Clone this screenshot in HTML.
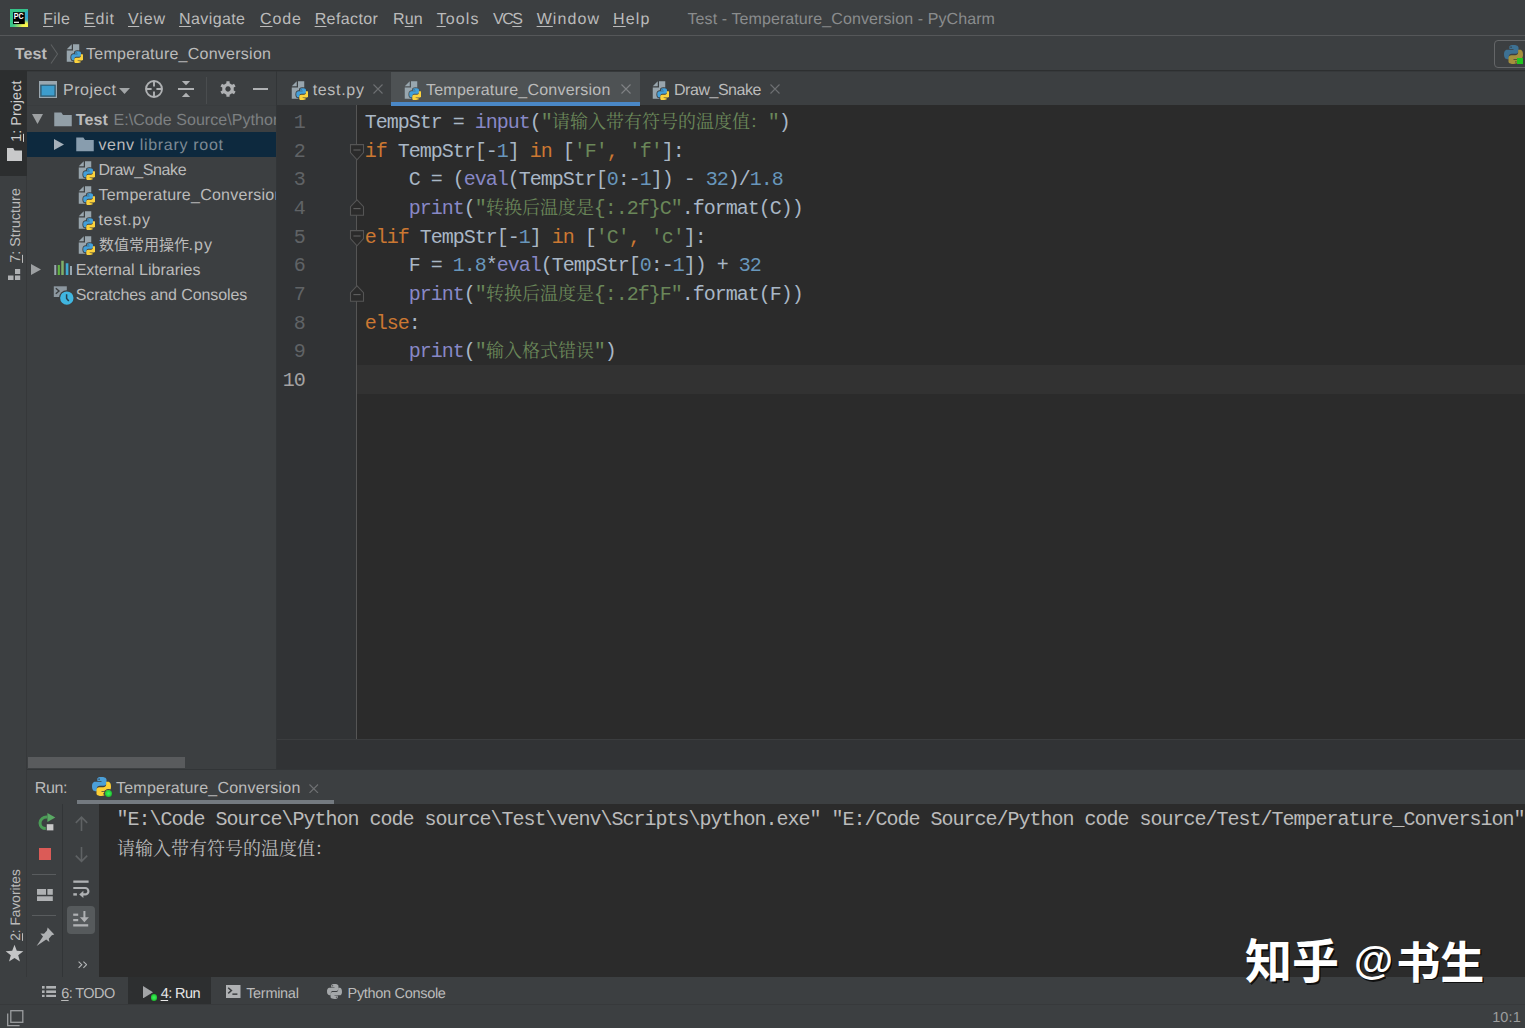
<!DOCTYPE html>
<html><head><meta charset="utf-8"><title>Test - Temperature_Conversion - PyCharm</title>
<style>
html,body{margin:0;padding:0;}
body{width:1525px;height:1028px;overflow:hidden;background:#3c3f41;position:relative;font-family:"Liberation Sans",sans-serif;}
#r{position:absolute;left:0;top:0;width:1525px;height:1028px;overflow:hidden;}
#r>div,#r>span,#r>svg{position:absolute;display:block;white-space:pre;}
.s{font-family:"Liberation Sans",sans-serif;text-rendering:geometricPrecision;}
.m{font-family:"Liberation Mono",monospace;}
u{text-decoration:underline;text-underline-offset:2px;text-decoration-thickness:1px;}
</style></head>
<body><div id="r">
<div style="left:0px;top:35px;width:1525px;height:1px;background:#555759;"></div>
<div style="left:0px;top:70px;width:1525px;height:1px;background:#2d2f30;"></div>
<div style="left:0px;top:71px;width:1525px;height:1px;background:#36393b;"></div>
<div style="left:0px;top:71px;width:27px;height:906px;background:#3c3f41;"></div>
<div style="left:0px;top:71px;width:27px;height:105px;background:#2c2e2f;"></div>
<div style="left:26px;top:176px;width:1px;height:801px;background:#36383a;"></div>
<div style="left:27px;top:105px;width:249px;height:1px;background:#393c3e;"></div>
<div style="left:27px;top:132px;width:249px;height:25px;background:#0d293e;"></div>
<div style="left:276px;top:71px;width:1px;height:699px;background:#323537;"></div>
<div style="left:391px;top:72px;width:249px;height:33px;background:#4e5254;"></div>
<div style="left:277px;top:105px;width:1248px;height:635px;background:#2b2b2b;"></div>
<div style="left:277px;top:105px;width:79px;height:635px;background:#313335;"></div>
<div style="left:356px;top:105px;width:1px;height:635px;background:#555555;"></div>
<div style="left:357px;top:365px;width:1168px;height:29px;background:#323232;"></div>
<div style="left:391px;top:102px;width:249px;height:4px;background:#4a88c7;"></div>
<div style="left:277px;top:739px;width:1248px;height:1px;background:#3b3d3f;"></div>
<div style="left:277px;top:740px;width:1248px;height:30px;background:#313335;"></div>
<div style="left:28px;top:757px;width:157px;height:11px;background:#595b5d;"></div>
<div style="left:27px;top:769px;width:1498px;height:1px;background:#323537;"></div>
<div style="left:27px;top:770px;width:1498px;height:34px;background:#3c3f41;"></div>
<div style="left:77px;top:800px;width:257px;height:4px;background:#747a80;"></div>
<div style="left:62px;top:804px;width:1px;height:173px;background:#323537;"></div>
<div style="left:99px;top:804px;width:1426px;height:173px;background:#2b2b2b;"></div>
<div style="left:0px;top:977px;width:1525px;height:28px;background:#3c3f41;"></div>
<div style="left:128px;top:977px;width:83px;height:28px;background:#2d2f30;"></div>
<div style="left:0px;top:1004px;width:1525px;height:1px;background:#37393b;"></div>
<div style="left:0px;top:1005px;width:1525px;height:23px;background:#3c3f41;"></div>
<span class="s " style="left:43.04px;top:9.00px;font-size:16px;line-height:21px;color:#bbbbbb;letter-spacing:0.379px;"><u>F</u>ile</span>
<span class="s " style="left:84.04px;top:9.00px;font-size:16px;line-height:21px;color:#bbbbbb;letter-spacing:0.783px;"><u>E</u>dit</span>
<span class="s " style="left:128.04px;top:9.00px;font-size:16px;line-height:21px;color:#bbbbbb;letter-spacing:0.843px;"><u>V</u>iew</span>
<span class="s " style="left:179.04px;top:9.00px;font-size:16px;line-height:21px;color:#bbbbbb;letter-spacing:0.396px;"><u>N</u>avigate</span>
<span class="s " style="left:260.04px;top:9.00px;font-size:16px;line-height:21px;color:#bbbbbb;letter-spacing:0.890px;"><u>C</u>ode</span>
<span class="s " style="left:314.64px;top:9.00px;font-size:16px;line-height:21px;color:#bbbbbb;letter-spacing:0.407px;"><u>R</u>efactor</span>
<span class="s " style="left:393.04px;top:9.00px;font-size:16px;line-height:21px;color:#bbbbbb;letter-spacing:0.084px;">R<u>u</u>n</span>
<span class="s " style="left:436.64px;top:9.00px;font-size:16px;line-height:21px;color:#bbbbbb;letter-spacing:1.142px;"><u>T</u>ools</span>
<span class="s " style="left:493.04px;top:9.00px;font-size:16px;line-height:21px;color:#bbbbbb;letter-spacing:-1.490px;">VC<u>S</u></span>
<span class="s " style="left:536.64px;top:9.00px;font-size:16px;line-height:21px;color:#bbbbbb;letter-spacing:1.082px;"><u>W</u>indow</span>
<span class="s " style="left:613.04px;top:9.00px;font-size:16px;line-height:21px;color:#bbbbbb;letter-spacing:1.137px;"><u>H</u>elp</span>
<span class="s " style="left:687.44px;top:9.00px;font-size:16px;line-height:21px;color:#8a8c8d;letter-spacing:0.097px;">Test - Temperature_Conversion - PyCharm</span>
<span class="s " style="left:14.64px;top:44.00px;font-size:16px;line-height:21px;color:#bbbbbb;font-weight:bold;letter-spacing:0.203px;">Test</span>
<span class="s " style="left:86.04px;top:44.00px;font-size:16px;line-height:21px;color:#bbbbbb;letter-spacing:0.251px;">Temperature_Conversion</span>
<span class="s " style="left:63.04px;top:80.00px;font-size:16px;line-height:21px;color:#bbbbbb;letter-spacing:0.520px;">Project</span>
<span class="s " style="left:312.64px;top:80.00px;font-size:16px;line-height:21px;color:#bbbbbb;letter-spacing:0.698px;">test.py</span>
<span class="s " style="left:426.04px;top:80.00px;font-size:16px;line-height:21px;color:#bbbbbb;letter-spacing:0.222px;">Temperature_Conversion</span>
<span class="s " style="left:674.04px;top:80.00px;font-size:16px;line-height:21px;color:#bbbbbb;letter-spacing:-0.476px;">Draw_Snake</span>
<span class="s " style="left:75.64px;top:110.00px;font-size:16px;line-height:21px;color:#bbbbbb;font-weight:bold;letter-spacing:0.203px;">Test</span>
<span class="s " style="left:113.44px;top:110.00px;font-size:16px;line-height:21px;color:#7d8082;letter-spacing:0.063px;width:162.5px;overflow:hidden;">E:\Code Source\Python code</span>
<span class="s " style="left:98.44px;top:135.00px;font-size:16px;line-height:21px;color:#bbbbbb;letter-spacing:0.574px;">venv</span>
<span class="s " style="left:139.64px;top:135.00px;font-size:16px;line-height:21px;color:#7d8a94;letter-spacing:0.704px;">library root</span>
<span class="s " style="left:98.44px;top:160.00px;font-size:16px;line-height:21px;color:#bbbbbb;letter-spacing:-0.387px;">Draw_Snake</span>
<span class="s " style="left:98.44px;top:185.00px;font-size:16px;line-height:21px;color:#bbbbbb;letter-spacing:0.251px;width:177.5px;overflow:hidden;">Temperature_Conversion</span>
<span class="s " style="left:98.44px;top:210.00px;font-size:16px;line-height:21px;color:#bbbbbb;letter-spacing:0.731px;">test.py</span>
<svg style="left:98.5px;top:235.00px;" width="90.0" height="19.5" viewBox="0 0 90 19.5"><text x="0" y="15" font-size="15" fill="#bbbbbb" font-family="'Liberation Sans','Noto Sans CJK SC',sans-serif">数值常用操作</text></svg>
<span class="s " style="left:188.54px;top:235.00px;font-size:16px;line-height:21px;color:#bbbbbb;letter-spacing:1.038px;">.py</span>
<span class="s " style="left:75.64px;top:260.00px;font-size:16px;line-height:21px;color:#bbbbbb;letter-spacing:0.024px;">External Libraries</span>
<span class="s " style="left:75.64px;top:285.00px;font-size:16px;line-height:21px;color:#bbbbbb;letter-spacing:-0.082px;">Scratches and Consoles</span>
<span class="s " style="left:34.64px;top:778.00px;font-size:16px;line-height:21px;color:#bbbbbb;letter-spacing:-0.293px;">Run:</span>
<span class="s " style="left:116.04px;top:778.00px;font-size:16px;line-height:21px;color:#bbbbbb;letter-spacing:0.222px;">Temperature_Conversion</span>
<span class="s " style="left:61.13px;top:984.00px;font-size:14.5px;line-height:20px;color:#bbbbbb;letter-spacing:-0.557px;"><u>6</u>: TODO</span>
<span class="s " style="left:160.63px;top:984.00px;font-size:14.5px;line-height:20px;color:#e8e8e8;letter-spacing:-0.576px;"><u>4</u>: Run</span>
<span class="s " style="left:246.13px;top:984.00px;font-size:14.5px;line-height:20px;color:#bbbbbb;letter-spacing:-0.294px;">Terminal</span>
<span class="s " style="left:347.53px;top:984.00px;font-size:14.5px;line-height:20px;color:#bbbbbb;letter-spacing:-0.310px;">Python Console</span>
<span class="s " style="left:1492.13px;top:1008.00px;font-size:14.5px;line-height:20px;color:#9b9d9e;letter-spacing:0.173px;">10:1</span>
<span class="s" style="left:16.5px;top:141px;font-size:14.3px;line-height:20px;color:#d0d0d0;letter-spacing:0.090px;transform-origin:0 0;transform:rotate(-90deg) translate(-0.86px,-10.0px);"><u>1</u>: Project</span>
<span class="s" style="left:16px;top:262px;font-size:14.3px;line-height:20px;color:#bbbbbb;letter-spacing:0.073px;transform-origin:0 0;transform:rotate(-90deg) translate(-0.86px,-10.0px);"><u>7</u>: Structure</span>
<span class="s" style="left:16px;top:940px;font-size:13.7px;line-height:20px;color:#bbbbbb;letter-spacing:0.007px;transform-origin:0 0;transform:rotate(-90deg) translate(-0.82px,-10.0px);"><u>2</u>: Favorites</span>
<svg style="left:10px;top:8.6px;" width="18.2" height="18.6" viewBox="0 0 18.2 18.6"><defs><radialGradient id="pcy" cx="1" cy="1" r="0.95"><stop offset="0" stop-color="#fcf84a"/><stop offset=".35" stop-color="#f3f24e"/><stop offset=".7" stop-color="#9fdc6a" stop-opacity=".6"/><stop offset="1" stop-color="#3bc48c" stop-opacity="0"/></radialGradient><radialGradient id="pcb" cx="1" cy=".38" r=".42"><stop offset="0" stop-color="#2a9fdc"/><stop offset=".55" stop-color="#2fa8cf" stop-opacity=".85"/><stop offset="1" stop-color="#35b9a5" stop-opacity="0"/></radialGradient></defs><rect width="18.2" height="18.6" fill="#36c389"/><rect width="18.2" height="18.6" fill="url(#pcy)"/><rect width="18.2" height="18.6" fill="url(#pcb)"/><rect x="3" y="3.2" width="11.8" height="11.9" fill="#000"/><text transform="translate(3.8,10.4) scale(0.804,1)" x="0" y="0" font-size="8.87" font-weight="bold" fill="#fff" font-family="'Liberation Sans',sans-serif">PC</text><rect x="4" y="12.7" width="5" height="1.3" fill="#e8e8e8"/></svg>
<svg style="left:50px;top:44px;" width="9" height="20" viewBox="0 0 9 20"><path d="M1,0.5L7.5,10L1,19.5" stroke="#5d6062" stroke-width="1.1" fill="none"/></svg>
<svg style="left:63px;top:43px;" width="20" height="20" viewBox="0 0 16 16"><g fill="#9fadb6" fill-opacity=".93"><path d="M7,1L3,5H7Z"/><path d="M8,1V6H3V15H13V1Z"/></g><g transform="translate(6.6,6.5) scale(0.93,0.9)"><path d="M5.4,0C3,0 3.1,1.1 3.1,1.1V2.3H5.5V2.7H2C2,2.7 0,2.5 0,5.4C0,8.3 1.7,8.2 1.7,8.2H2.8V6.8C2.8,6.8 2.7,5.1 4.5,5.1H6.8C6.8,5.1 8.4,5.1 8.4,3.5V1.6C8.4,1.6 8.7,0 5.4,0Z" fill="#3c3f41" stroke="#3c3f41" stroke-width="1.5"/><path d="M5.4,0C3,0 3.1,1.1 3.1,1.1V2.3H5.5V2.7H2C2,2.7 0,2.5 0,5.4C0,8.3 1.7,8.2 1.7,8.2H2.8V6.8C2.8,6.8 2.7,5.1 4.5,5.1H6.8C6.8,5.1 8.4,5.1 8.4,3.5V1.6C8.4,1.6 8.7,0 5.4,0Z" fill="#3c3f41" stroke="#3c3f41" stroke-width="1.5" transform="rotate(180 5.5 5.5)"/></g><g transform="translate(6.6,6.5) scale(0.93,0.9)" opacity="1"><path d="M5.4,0C3,0 3.1,1.1 3.1,1.1V2.3H5.5V2.7H2C2,2.7 0,2.5 0,5.4C0,8.3 1.7,8.2 1.7,8.2H2.8V6.8C2.8,6.8 2.7,5.1 4.5,5.1H6.8C6.8,5.1 8.4,5.1 8.4,3.5V1.6C8.4,1.6 8.7,0 5.4,0Z" fill="#439fd8"/><path d="M5.4,0C3,0 3.1,1.1 3.1,1.1V2.3H5.5V2.7H2C2,2.7 0,2.5 0,5.4C0,8.3 1.7,8.2 1.7,8.2H2.8V6.8C2.8,6.8 2.7,5.1 4.5,5.1H6.8C6.8,5.1 8.4,5.1 8.4,3.5V1.6C8.4,1.6 8.7,0 5.4,0Z" fill="#fbd23c" transform="rotate(180 5.5 5.5)"/><circle cx="4.1" cy="1.25" r="0.5" fill="#2b2b2b" opacity=".6"/><circle cx="6.9" cy="9.75" r="0.5" fill="#2b2b2b" opacity=".6"/></g></svg>
<div style="left:1494px;top:40px;width:40px;height:26px;border:1px solid #646668;border-radius:4px;"></div>
<svg style="left:1504px;top:45px;" width="19" height="19" viewBox="0 0 11 11"><g transform="translate(0,0) scale(1,1)" opacity="0.55"><path d="M5.4,0C3,0 3.1,1.1 3.1,1.1V2.3H5.5V2.7H2C2,2.7 0,2.5 0,5.4C0,8.3 1.7,8.2 1.7,8.2H2.8V6.8C2.8,6.8 2.7,5.1 4.5,5.1H6.8C6.8,5.1 8.4,5.1 8.4,3.5V1.6C8.4,1.6 8.7,0 5.4,0Z" fill="#3f9ad6"/><path d="M5.4,0C3,0 3.1,1.1 3.1,1.1V2.3H5.5V2.7H2C2,2.7 0,2.5 0,5.4C0,8.3 1.7,8.2 1.7,8.2H2.8V6.8C2.8,6.8 2.7,5.1 4.5,5.1H6.8C6.8,5.1 8.4,5.1 8.4,3.5V1.6C8.4,1.6 8.7,0 5.4,0Z" fill="#fcd53a" transform="rotate(180 5.5 5.5)"/><circle cx="4.1" cy="1.25" r="0.5" fill="#2b2b2b" opacity=".6"/><circle cx="6.9" cy="9.75" r="0.5" fill="#2b2b2b" opacity=".6"/></g></svg>
<div style="left:1517px;top:58px;width:6px;height:6px;background:#21c420;"></div>
<svg style="left:39px;top:81px;" width="18" height="17" viewBox="0 0 18 17"><rect x="0.6" y="0.6" width="16.8" height="15.8" fill="#2f5d73" stroke="#9aa7b0" stroke-width="1.2"/><rect x="0" y="0" width="18" height="3.6" fill="#9aa7b0"/><rect x="2.6" y="4.8" width="12.8" height="9.6" fill="#3d9dcd"/></svg>
<svg style="left:119px;top:88px;" width="11" height="6" viewBox="0 0 11 6"><path d="M0,0H11L5.5,6Z" fill="#a2a5a7"/></svg>
<svg style="left:144px;top:79px;" width="20" height="20" viewBox="0 0 20 20"><g stroke="#afb1b3" fill="none" stroke-width="1.9"><circle cx="10" cy="10" r="8"/><path d="M10,2.5V7.6M10,12.4V17.5M2.5,10H7.6M12.4,10H17.5"/></g></svg>
<svg style="left:178px;top:81px;" width="16" height="16" viewBox="0 0 16 16"><g fill="#afb1b3"><path d="M3.8,0H12.2L8,4.3Z"/><rect x="0" y="7" width="16" height="2"/><path d="M3.8,16H12.2L8,11.7Z"/></g></svg>
<div style="left:206px;top:77px;width:1px;height:27px;background:#4a4d4f;"></div>
<svg style="left:220px;top:80.5px;" width="16" height="16" viewBox="0 0 16 16"><path fill-rule="evenodd" fill="#afb1b3" d="M6.35,2.33L6.45,0.15L9.55,0.15L9.65,2.33L12.08,3.74L14.02,2.73L15.57,5.42L13.73,6.59L13.73,9.41L15.57,10.58L14.02,13.27L12.08,12.26L9.65,13.67L9.55,15.85L6.45,15.85L6.35,13.67L3.92,12.26L1.98,13.27L0.43,10.58L2.27,9.41L2.27,6.59L0.43,5.42L1.98,2.73L3.92,3.74Z M8,5.3a2.7,2.7 0 1,0 0.001,0Z"/></svg>
<div style="left:252.5px;top:88.2px;width:15px;height:2.2px;background:#afb1b3;"></div>
<svg style="left:288px;top:80px;" width="20" height="20" viewBox="0 0 16 16"><g fill="#9fadb6" fill-opacity=".93"><path d="M7,1L3,5H7Z"/><path d="M8,1V6H3V15H13V1Z"/></g><g transform="translate(6.6,6.5) scale(0.93,0.9)"><path d="M5.4,0C3,0 3.1,1.1 3.1,1.1V2.3H5.5V2.7H2C2,2.7 0,2.5 0,5.4C0,8.3 1.7,8.2 1.7,8.2H2.8V6.8C2.8,6.8 2.7,5.1 4.5,5.1H6.8C6.8,5.1 8.4,5.1 8.4,3.5V1.6C8.4,1.6 8.7,0 5.4,0Z" fill="#3c3f41" stroke="#3c3f41" stroke-width="1.5"/><path d="M5.4,0C3,0 3.1,1.1 3.1,1.1V2.3H5.5V2.7H2C2,2.7 0,2.5 0,5.4C0,8.3 1.7,8.2 1.7,8.2H2.8V6.8C2.8,6.8 2.7,5.1 4.5,5.1H6.8C6.8,5.1 8.4,5.1 8.4,3.5V1.6C8.4,1.6 8.7,0 5.4,0Z" fill="#3c3f41" stroke="#3c3f41" stroke-width="1.5" transform="rotate(180 5.5 5.5)"/></g><g transform="translate(6.6,6.5) scale(0.93,0.9)" opacity="1"><path d="M5.4,0C3,0 3.1,1.1 3.1,1.1V2.3H5.5V2.7H2C2,2.7 0,2.5 0,5.4C0,8.3 1.7,8.2 1.7,8.2H2.8V6.8C2.8,6.8 2.7,5.1 4.5,5.1H6.8C6.8,5.1 8.4,5.1 8.4,3.5V1.6C8.4,1.6 8.7,0 5.4,0Z" fill="#439fd8"/><path d="M5.4,0C3,0 3.1,1.1 3.1,1.1V2.3H5.5V2.7H2C2,2.7 0,2.5 0,5.4C0,8.3 1.7,8.2 1.7,8.2H2.8V6.8C2.8,6.8 2.7,5.1 4.5,5.1H6.8C6.8,5.1 8.4,5.1 8.4,3.5V1.6C8.4,1.6 8.7,0 5.4,0Z" fill="#fbd23c" transform="rotate(180 5.5 5.5)"/><circle cx="4.1" cy="1.25" r="0.5" fill="#2b2b2b" opacity=".6"/><circle cx="6.9" cy="9.75" r="0.5" fill="#2b2b2b" opacity=".6"/></g></svg>
<svg style="left:373px;top:84.3px;" width="10" height="10" viewBox="0 0 10 10"><path d="M0.5,0.5L9.5,9.5M9.5,0.5L0.5,9.5" stroke="#6e7072" stroke-width="1.1" fill="none"/></svg>
<svg style="left:400.7px;top:80px;" width="20" height="20" viewBox="0 0 16 16"><g fill="#9fadb6" fill-opacity=".93"><path d="M7,1L3,5H7Z"/><path d="M8,1V6H3V15H13V1Z"/></g><g transform="translate(6.6,6.5) scale(0.93,0.9)"><path d="M5.4,0C3,0 3.1,1.1 3.1,1.1V2.3H5.5V2.7H2C2,2.7 0,2.5 0,5.4C0,8.3 1.7,8.2 1.7,8.2H2.8V6.8C2.8,6.8 2.7,5.1 4.5,5.1H6.8C6.8,5.1 8.4,5.1 8.4,3.5V1.6C8.4,1.6 8.7,0 5.4,0Z" fill="#4e5254" stroke="#4e5254" stroke-width="1.5"/><path d="M5.4,0C3,0 3.1,1.1 3.1,1.1V2.3H5.5V2.7H2C2,2.7 0,2.5 0,5.4C0,8.3 1.7,8.2 1.7,8.2H2.8V6.8C2.8,6.8 2.7,5.1 4.5,5.1H6.8C6.8,5.1 8.4,5.1 8.4,3.5V1.6C8.4,1.6 8.7,0 5.4,0Z" fill="#4e5254" stroke="#4e5254" stroke-width="1.5" transform="rotate(180 5.5 5.5)"/></g><g transform="translate(6.6,6.5) scale(0.93,0.9)" opacity="1"><path d="M5.4,0C3,0 3.1,1.1 3.1,1.1V2.3H5.5V2.7H2C2,2.7 0,2.5 0,5.4C0,8.3 1.7,8.2 1.7,8.2H2.8V6.8C2.8,6.8 2.7,5.1 4.5,5.1H6.8C6.8,5.1 8.4,5.1 8.4,3.5V1.6C8.4,1.6 8.7,0 5.4,0Z" fill="#439fd8"/><path d="M5.4,0C3,0 3.1,1.1 3.1,1.1V2.3H5.5V2.7H2C2,2.7 0,2.5 0,5.4C0,8.3 1.7,8.2 1.7,8.2H2.8V6.8C2.8,6.8 2.7,5.1 4.5,5.1H6.8C6.8,5.1 8.4,5.1 8.4,3.5V1.6C8.4,1.6 8.7,0 5.4,0Z" fill="#fbd23c" transform="rotate(180 5.5 5.5)"/><circle cx="4.1" cy="1.25" r="0.5" fill="#2b2b2b" opacity=".6"/><circle cx="6.9" cy="9.75" r="0.5" fill="#2b2b2b" opacity=".6"/></g></svg>
<svg style="left:620.8px;top:84.3px;" width="10" height="10" viewBox="0 0 10 10"><path d="M0.5,0.5L9.5,9.5M9.5,0.5L0.5,9.5" stroke="#808385" stroke-width="1.1" fill="none"/></svg>
<svg style="left:648.7px;top:80px;" width="20" height="20" viewBox="0 0 16 16"><g fill="#9fadb6" fill-opacity=".93"><path d="M7,1L3,5H7Z"/><path d="M8,1V6H3V15H13V1Z"/></g><g transform="translate(6.6,6.5) scale(0.93,0.9)"><path d="M5.4,0C3,0 3.1,1.1 3.1,1.1V2.3H5.5V2.7H2C2,2.7 0,2.5 0,5.4C0,8.3 1.7,8.2 1.7,8.2H2.8V6.8C2.8,6.8 2.7,5.1 4.5,5.1H6.8C6.8,5.1 8.4,5.1 8.4,3.5V1.6C8.4,1.6 8.7,0 5.4,0Z" fill="#3c3f41" stroke="#3c3f41" stroke-width="1.5"/><path d="M5.4,0C3,0 3.1,1.1 3.1,1.1V2.3H5.5V2.7H2C2,2.7 0,2.5 0,5.4C0,8.3 1.7,8.2 1.7,8.2H2.8V6.8C2.8,6.8 2.7,5.1 4.5,5.1H6.8C6.8,5.1 8.4,5.1 8.4,3.5V1.6C8.4,1.6 8.7,0 5.4,0Z" fill="#3c3f41" stroke="#3c3f41" stroke-width="1.5" transform="rotate(180 5.5 5.5)"/></g><g transform="translate(6.6,6.5) scale(0.93,0.9)" opacity="1"><path d="M5.4,0C3,0 3.1,1.1 3.1,1.1V2.3H5.5V2.7H2C2,2.7 0,2.5 0,5.4C0,8.3 1.7,8.2 1.7,8.2H2.8V6.8C2.8,6.8 2.7,5.1 4.5,5.1H6.8C6.8,5.1 8.4,5.1 8.4,3.5V1.6C8.4,1.6 8.7,0 5.4,0Z" fill="#439fd8"/><path d="M5.4,0C3,0 3.1,1.1 3.1,1.1V2.3H5.5V2.7H2C2,2.7 0,2.5 0,5.4C0,8.3 1.7,8.2 1.7,8.2H2.8V6.8C2.8,6.8 2.7,5.1 4.5,5.1H6.8C6.8,5.1 8.4,5.1 8.4,3.5V1.6C8.4,1.6 8.7,0 5.4,0Z" fill="#fbd23c" transform="rotate(180 5.5 5.5)"/><circle cx="4.1" cy="1.25" r="0.5" fill="#2b2b2b" opacity=".6"/><circle cx="6.9" cy="9.75" r="0.5" fill="#2b2b2b" opacity=".6"/></g></svg>
<svg style="left:770px;top:84.3px;" width="10" height="10" viewBox="0 0 10 10"><path d="M0.5,0.5L9.5,9.5M9.5,0.5L0.5,9.5" stroke="#6e7072" stroke-width="1.1" fill="none"/></svg>
<svg style="left:31.5px;top:114px;" width="11" height="10" viewBox="0 0 11 10"><path d="M0,0H11L5.5,10Z" fill="#9da0a2"/></svg>
<svg style="left:53px;top:110px;" width="20" height="20" viewBox="0 0 16 16"><path d="M1,13H15V4H8L6.7,2H1Z" fill="#9aa7b0" fill-opacity="0.92"/></svg>
<svg style="left:54px;top:138.7px;" width="10" height="11" viewBox="0 0 10 11"><path d="M0,0L10,5.5L0,11Z" fill="#a5b0ba"/></svg>
<svg style="left:74.7px;top:135px;" width="20" height="20" viewBox="0 0 16 16"><path d="M1,13H15V4H8L6.7,2H1Z" fill="#9fb2c2" fill-opacity="0.85"/></svg>
<svg style="left:75.2px;top:160px;" width="20" height="20" viewBox="0 0 16 16"><g fill="#9fadb6" fill-opacity=".93"><path d="M7,1L3,5H7Z"/><path d="M8,1V6H3V15H13V1Z"/></g><g transform="translate(6.6,6.5) scale(0.93,0.9)"><path d="M5.4,0C3,0 3.1,1.1 3.1,1.1V2.3H5.5V2.7H2C2,2.7 0,2.5 0,5.4C0,8.3 1.7,8.2 1.7,8.2H2.8V6.8C2.8,6.8 2.7,5.1 4.5,5.1H6.8C6.8,5.1 8.4,5.1 8.4,3.5V1.6C8.4,1.6 8.7,0 5.4,0Z" fill="#3c3f41" stroke="#3c3f41" stroke-width="1.5"/><path d="M5.4,0C3,0 3.1,1.1 3.1,1.1V2.3H5.5V2.7H2C2,2.7 0,2.5 0,5.4C0,8.3 1.7,8.2 1.7,8.2H2.8V6.8C2.8,6.8 2.7,5.1 4.5,5.1H6.8C6.8,5.1 8.4,5.1 8.4,3.5V1.6C8.4,1.6 8.7,0 5.4,0Z" fill="#3c3f41" stroke="#3c3f41" stroke-width="1.5" transform="rotate(180 5.5 5.5)"/></g><g transform="translate(6.6,6.5) scale(0.93,0.9)" opacity="1"><path d="M5.4,0C3,0 3.1,1.1 3.1,1.1V2.3H5.5V2.7H2C2,2.7 0,2.5 0,5.4C0,8.3 1.7,8.2 1.7,8.2H2.8V6.8C2.8,6.8 2.7,5.1 4.5,5.1H6.8C6.8,5.1 8.4,5.1 8.4,3.5V1.6C8.4,1.6 8.7,0 5.4,0Z" fill="#439fd8"/><path d="M5.4,0C3,0 3.1,1.1 3.1,1.1V2.3H5.5V2.7H2C2,2.7 0,2.5 0,5.4C0,8.3 1.7,8.2 1.7,8.2H2.8V6.8C2.8,6.8 2.7,5.1 4.5,5.1H6.8C6.8,5.1 8.4,5.1 8.4,3.5V1.6C8.4,1.6 8.7,0 5.4,0Z" fill="#fbd23c" transform="rotate(180 5.5 5.5)"/><circle cx="4.1" cy="1.25" r="0.5" fill="#2b2b2b" opacity=".6"/><circle cx="6.9" cy="9.75" r="0.5" fill="#2b2b2b" opacity=".6"/></g></svg>
<svg style="left:75.2px;top:185px;" width="20" height="20" viewBox="0 0 16 16"><g fill="#9fadb6" fill-opacity=".93"><path d="M7,1L3,5H7Z"/><path d="M8,1V6H3V15H13V1Z"/></g><g transform="translate(6.6,6.5) scale(0.93,0.9)"><path d="M5.4,0C3,0 3.1,1.1 3.1,1.1V2.3H5.5V2.7H2C2,2.7 0,2.5 0,5.4C0,8.3 1.7,8.2 1.7,8.2H2.8V6.8C2.8,6.8 2.7,5.1 4.5,5.1H6.8C6.8,5.1 8.4,5.1 8.4,3.5V1.6C8.4,1.6 8.7,0 5.4,0Z" fill="#3c3f41" stroke="#3c3f41" stroke-width="1.5"/><path d="M5.4,0C3,0 3.1,1.1 3.1,1.1V2.3H5.5V2.7H2C2,2.7 0,2.5 0,5.4C0,8.3 1.7,8.2 1.7,8.2H2.8V6.8C2.8,6.8 2.7,5.1 4.5,5.1H6.8C6.8,5.1 8.4,5.1 8.4,3.5V1.6C8.4,1.6 8.7,0 5.4,0Z" fill="#3c3f41" stroke="#3c3f41" stroke-width="1.5" transform="rotate(180 5.5 5.5)"/></g><g transform="translate(6.6,6.5) scale(0.93,0.9)" opacity="1"><path d="M5.4,0C3,0 3.1,1.1 3.1,1.1V2.3H5.5V2.7H2C2,2.7 0,2.5 0,5.4C0,8.3 1.7,8.2 1.7,8.2H2.8V6.8C2.8,6.8 2.7,5.1 4.5,5.1H6.8C6.8,5.1 8.4,5.1 8.4,3.5V1.6C8.4,1.6 8.7,0 5.4,0Z" fill="#439fd8"/><path d="M5.4,0C3,0 3.1,1.1 3.1,1.1V2.3H5.5V2.7H2C2,2.7 0,2.5 0,5.4C0,8.3 1.7,8.2 1.7,8.2H2.8V6.8C2.8,6.8 2.7,5.1 4.5,5.1H6.8C6.8,5.1 8.4,5.1 8.4,3.5V1.6C8.4,1.6 8.7,0 5.4,0Z" fill="#fbd23c" transform="rotate(180 5.5 5.5)"/><circle cx="4.1" cy="1.25" r="0.5" fill="#2b2b2b" opacity=".6"/><circle cx="6.9" cy="9.75" r="0.5" fill="#2b2b2b" opacity=".6"/></g></svg>
<svg style="left:75.2px;top:210px;" width="20" height="20" viewBox="0 0 16 16"><g fill="#9fadb6" fill-opacity=".93"><path d="M7,1L3,5H7Z"/><path d="M8,1V6H3V15H13V1Z"/></g><g transform="translate(6.6,6.5) scale(0.93,0.9)"><path d="M5.4,0C3,0 3.1,1.1 3.1,1.1V2.3H5.5V2.7H2C2,2.7 0,2.5 0,5.4C0,8.3 1.7,8.2 1.7,8.2H2.8V6.8C2.8,6.8 2.7,5.1 4.5,5.1H6.8C6.8,5.1 8.4,5.1 8.4,3.5V1.6C8.4,1.6 8.7,0 5.4,0Z" fill="#3c3f41" stroke="#3c3f41" stroke-width="1.5"/><path d="M5.4,0C3,0 3.1,1.1 3.1,1.1V2.3H5.5V2.7H2C2,2.7 0,2.5 0,5.4C0,8.3 1.7,8.2 1.7,8.2H2.8V6.8C2.8,6.8 2.7,5.1 4.5,5.1H6.8C6.8,5.1 8.4,5.1 8.4,3.5V1.6C8.4,1.6 8.7,0 5.4,0Z" fill="#3c3f41" stroke="#3c3f41" stroke-width="1.5" transform="rotate(180 5.5 5.5)"/></g><g transform="translate(6.6,6.5) scale(0.93,0.9)" opacity="1"><path d="M5.4,0C3,0 3.1,1.1 3.1,1.1V2.3H5.5V2.7H2C2,2.7 0,2.5 0,5.4C0,8.3 1.7,8.2 1.7,8.2H2.8V6.8C2.8,6.8 2.7,5.1 4.5,5.1H6.8C6.8,5.1 8.4,5.1 8.4,3.5V1.6C8.4,1.6 8.7,0 5.4,0Z" fill="#439fd8"/><path d="M5.4,0C3,0 3.1,1.1 3.1,1.1V2.3H5.5V2.7H2C2,2.7 0,2.5 0,5.4C0,8.3 1.7,8.2 1.7,8.2H2.8V6.8C2.8,6.8 2.7,5.1 4.5,5.1H6.8C6.8,5.1 8.4,5.1 8.4,3.5V1.6C8.4,1.6 8.7,0 5.4,0Z" fill="#fbd23c" transform="rotate(180 5.5 5.5)"/><circle cx="4.1" cy="1.25" r="0.5" fill="#2b2b2b" opacity=".6"/><circle cx="6.9" cy="9.75" r="0.5" fill="#2b2b2b" opacity=".6"/></g></svg>
<svg style="left:75.2px;top:235px;" width="20" height="20" viewBox="0 0 16 16"><g fill="#9fadb6" fill-opacity=".93"><path d="M7,1L3,5H7Z"/><path d="M8,1V6H3V15H13V1Z"/></g><g transform="translate(6.6,6.5) scale(0.93,0.9)"><path d="M5.4,0C3,0 3.1,1.1 3.1,1.1V2.3H5.5V2.7H2C2,2.7 0,2.5 0,5.4C0,8.3 1.7,8.2 1.7,8.2H2.8V6.8C2.8,6.8 2.7,5.1 4.5,5.1H6.8C6.8,5.1 8.4,5.1 8.4,3.5V1.6C8.4,1.6 8.7,0 5.4,0Z" fill="#3c3f41" stroke="#3c3f41" stroke-width="1.5"/><path d="M5.4,0C3,0 3.1,1.1 3.1,1.1V2.3H5.5V2.7H2C2,2.7 0,2.5 0,5.4C0,8.3 1.7,8.2 1.7,8.2H2.8V6.8C2.8,6.8 2.7,5.1 4.5,5.1H6.8C6.8,5.1 8.4,5.1 8.4,3.5V1.6C8.4,1.6 8.7,0 5.4,0Z" fill="#3c3f41" stroke="#3c3f41" stroke-width="1.5" transform="rotate(180 5.5 5.5)"/></g><g transform="translate(6.6,6.5) scale(0.93,0.9)" opacity="1"><path d="M5.4,0C3,0 3.1,1.1 3.1,1.1V2.3H5.5V2.7H2C2,2.7 0,2.5 0,5.4C0,8.3 1.7,8.2 1.7,8.2H2.8V6.8C2.8,6.8 2.7,5.1 4.5,5.1H6.8C6.8,5.1 8.4,5.1 8.4,3.5V1.6C8.4,1.6 8.7,0 5.4,0Z" fill="#439fd8"/><path d="M5.4,0C3,0 3.1,1.1 3.1,1.1V2.3H5.5V2.7H2C2,2.7 0,2.5 0,5.4C0,8.3 1.7,8.2 1.7,8.2H2.8V6.8C2.8,6.8 2.7,5.1 4.5,5.1H6.8C6.8,5.1 8.4,5.1 8.4,3.5V1.6C8.4,1.6 8.7,0 5.4,0Z" fill="#fbd23c" transform="rotate(180 5.5 5.5)"/><circle cx="4.1" cy="1.25" r="0.5" fill="#2b2b2b" opacity=".6"/><circle cx="6.9" cy="9.75" r="0.5" fill="#2b2b2b" opacity=".6"/></g></svg>
<svg style="left:31px;top:264px;" width="10" height="11" viewBox="0 0 10 11"><path d="M0,0L10,5.5L0,11Z" fill="#9da0a2"/></svg>
<svg style="left:53px;top:260px;" width="20" height="20" viewBox="0 0 16 16"><g><rect x="1" y="4" width="1.6" height="8" fill="#9aa7b0"/><rect x="3.8" y="4" width="1.7" height="8" fill="#62b543"/><rect x="6.6" y="0.6" width="2" height="11.4" fill="#7fb069"/><rect x="10.2" y="2.6" width="2.1" height="9.4" fill="#40b6e0" fill-opacity=".9"/><rect x="13.6" y="4.8" width="1.6" height="7.2" fill="#9aa7b0"/></g></svg>
<svg style="left:53px;top:285px;" width="22" height="22" viewBox="0 0 22 22"><rect x="0.8" y="1.3" width="13" height="10.7" fill="#9aa7b0" fill-opacity=".85"/><path d="M2.8,3.2L6,6L2.8,8.8" stroke="#3c3f41" stroke-width="1.4" fill="none"/><circle cx="13.8" cy="13.1" r="7.9" fill="#3c3f41"/><circle cx="13.8" cy="13.1" r="6.7" fill="#40b6e0"/><path d="M13.6,9.2V13.4L15.8,16" stroke="#24414f" stroke-width="1.5" fill="none"/></svg>
<svg style="left:7px;top:147.5px;" width="15" height="13" viewBox="0 0 15 13"><path d="M0,13H15V2.6H7.6L6.2,0H0Z" fill="#c8c9ca"/></svg>
<svg style="left:8px;top:268.5px;" width="12.5" height="11.5" viewBox="0 0 12.5 11.5"><g fill="#afb1b3"><rect x="7" y="0" width="5.2" height="5"/><rect x="0" y="6.5" width="5.5" height="5"/><rect x="7" y="6.5" width="5.2" height="5"/></g></svg>
<svg style="left:5px;top:944px;" width="19" height="19" viewBox="0 0 19 19"><path d="M9.50,0.70L11.79,6.84L18.34,7.13L13.21,11.21L14.97,17.52L9.50,13.90L4.03,17.52L5.79,11.21L0.66,7.13L7.21,6.84Z" fill="#c4c5c6"/></svg>
<svg style="left:349px;top:144.267px;" width="16" height="17" viewBox="0 0 16 17"><path d="M1.5,0.6H14.5V8.6L8,15.8L1.5,8.6Z" fill="#2b2b2b" stroke="#555555" stroke-width="1.1"/><path d="M4.4,6H11.6" stroke="#606060" stroke-width="1.1"/></svg>
<svg style="left:349px;top:199.401px;" width="16" height="17" viewBox="0 0 16 17"><path d="M1.5,16.2H14.5V7.6L8,0.8L1.5,7.6Z" fill="#2b2b2b" stroke="#555555" stroke-width="1.1"/><path d="M4.4,9.6H11.6" stroke="#606060" stroke-width="1.1"/></svg>
<svg style="left:349px;top:230.268px;" width="16" height="17" viewBox="0 0 16 17"><path d="M1.5,0.6H14.5V8.6L8,15.8L1.5,8.6Z" fill="#2b2b2b" stroke="#555555" stroke-width="1.1"/><path d="M4.4,6H11.6" stroke="#606060" stroke-width="1.1"/></svg>
<svg style="left:349px;top:285.402px;" width="16" height="17" viewBox="0 0 16 17"><path d="M1.5,16.2H14.5V7.6L8,0.8L1.5,7.6Z" fill="#2b2b2b" stroke="#555555" stroke-width="1.1"/><path d="M4.4,9.6H11.6" stroke="#606060" stroke-width="1.1"/></svg>
<svg style="left:91.6px;top:776.8px;" width="19" height="19" viewBox="0 0 11 11"><g transform="translate(0,0) scale(1,1)" opacity="1"><path d="M5.4,0C3,0 3.1,1.1 3.1,1.1V2.3H5.5V2.7H2C2,2.7 0,2.5 0,5.4C0,8.3 1.7,8.2 1.7,8.2H2.8V6.8C2.8,6.8 2.7,5.1 4.5,5.1H6.8C6.8,5.1 8.4,5.1 8.4,3.5V1.6C8.4,1.6 8.7,0 5.4,0Z" fill="#4b9fd8"/><path d="M5.4,0C3,0 3.1,1.1 3.1,1.1V2.3H5.5V2.7H2C2,2.7 0,2.5 0,5.4C0,8.3 1.7,8.2 1.7,8.2H2.8V6.8C2.8,6.8 2.7,5.1 4.5,5.1H6.8C6.8,5.1 8.4,5.1 8.4,3.5V1.6C8.4,1.6 8.7,0 5.4,0Z" fill="#fccf35" transform="rotate(180 5.5 5.5)"/><circle cx="4.1" cy="1.25" r="0.5" fill="#2b2b2b" opacity=".6"/><circle cx="6.9" cy="9.75" r="0.5" fill="#2b2b2b" opacity=".6"/></g></svg>
<div style="left:105.4px;top:790.4px;width:7px;height:7px;border-radius:50%;background:radial-gradient(circle at 50% 50%,#3cf25a 0,#2fe04a 35%,#119c16 100%);box-shadow:0 0 0 1px #3c3f41;"></div>
<svg style="left:309.3px;top:783.6px;" width="9.5" height="9.5" viewBox="0 0 9.5 9.5"><path d="M0.5,0.5L9.0,9.0M9.0,0.5L0.5,9.0" stroke="#6e7072" stroke-width="1.1" fill="none"/></svg>
<svg style="left:36.5px;top:812.5px;" width="19" height="18" viewBox="0 0 19 18"><path d="M10.2,4.1C6.2,3.8 3,6.3 3,10.1C3,13.4 5.6,15.6 8.8,15.6" stroke="#4a9c56" stroke-width="3" fill="none"/><path d="M10.4,0L18.3,4.4L10.4,8.9Z" fill="#5aa964"/><rect x="9.8" y="11.2" width="6.6" height="6.2" fill="#c9c9c9"/></svg>
<div style="left:38.8px;top:847.8px;width:12.4px;height:12.4px;background:#db5b57;"></div>
<div style="left:32px;top:874px;width:24px;height:1px;background:#595c5e;"></div>
<svg style="left:37.4px;top:889px;" width="16" height="12.2" viewBox="0 0 16 12.2"><g fill="#afb1b3"><rect x="0" y="0" width="9" height="5.8"/><rect x="10.4" y="0" width="5.4" height="5.8"/><rect x="0" y="7.3" width="15.8" height="4.8"/></g></svg>
<div style="left:32px;top:915px;width:24px;height:1px;background:#595c5e;"></div>
<svg style="left:35.5px;top:926.5px;" width="19" height="19.5" viewBox="0 0 19 19.5"><path d="M11.6,0.6L18.3,7.4L15.8,8.2L12.8,11.8L13.4,15L10.2,12.6L0.6,19L7,9.4L4.4,6.4L8,6.8L11,3.4Z" fill="#afb1b3"/></svg>
<svg style="left:74.5px;top:815.5px;" width="13" height="15.5" viewBox="0 0 13 15.5"><path d="M6.5,15.5V1.2M0.8,6.9L6.5,1.2L12.2,6.9" stroke="#5f6264" stroke-width="1.6" fill="none"/></svg>
<svg style="left:74.5px;top:847px;" width="13" height="15.5" viewBox="0 0 13 15.5"><path d="M6.5,0V14.3M0.8,8.6L6.5,14.3L12.2,8.6" stroke="#5f6264" stroke-width="1.6" fill="none"/></svg>
<svg style="left:73px;top:880px;" width="17" height="18" viewBox="0 0 17 18"><g fill="#afb1b3"><rect x="0.3" y="0.5" width="15.3" height="2.3"/><rect x="0.3" y="13.2" width="3.6" height="2.4"/></g><path d="M0.3,8H12.2A3.2,3.2 0 0,1 12.2,14.4H9.6" stroke="#afb1b3" stroke-width="2.2" fill="none"/><path d="M10.4,10.8V18L6.2,14.4Z" fill="#afb1b3"/></svg>
<div style="left:67px;top:906px;width:28px;height:28px;border-radius:4px;background:#565a5c;"></div>
<svg style="left:73px;top:911px;" width="16" height="16" viewBox="0 0 16 16"><g fill="#afb1b3"><rect x="0.2" y="2.6" width="5" height="2.2"/><rect x="0.2" y="8" width="5" height="2.2"/><rect x="0.2" y="13.2" width="15" height="2.3"/><rect x="10.4" y="0" width="2" height="8"/><path d="M6.9,6.2H15.9L11.4,11.2Z"/></g></svg>
<svg style="left:77.5px;top:961px;" width="9.5" height="7.5" viewBox="0 0 9.5 7.5"><path d="M0.6,0.6L3.8,3.7L0.6,6.9M5.4,0.6L8.6,3.7L5.4,6.9" stroke="#b4b6b8" stroke-width="1.1" fill="none"/></svg>
<svg style="left:41.8px;top:985.7px;" width="14" height="11.5" viewBox="0 0 14 11.5"><g fill="#afb1b3"><rect x="0" y="0" width="2.6" height="2.6"/><rect x="4.2" y="0" width="9.8" height="2.6"/><rect x="0" y="4.4" width="2.6" height="2.6"/><rect x="4.2" y="4.4" width="9.8" height="2.6"/><rect x="0" y="8.8" width="2.6" height="2.6"/><rect x="4.2" y="8.8" width="9.8" height="2.6"/></g></svg>
<svg style="left:142.5px;top:985.7px;" width="10" height="12.4" viewBox="0 0 10 12.4"><path d="M0,0L10,6.2L0,12.4Z" fill="#a3a5a7"/></svg>
<div style="left:150.6px;top:994.4px;width:6.4px;height:6.4px;border-radius:50%;background:radial-gradient(circle at 50% 50%,#3cf25a 0,#2fe04a 35%,#119c16 100%);box-shadow:0 0 0 1px #2d2f30;"></div>
<svg style="left:226px;top:985px;" width="14.5" height="13" viewBox="0 0 14.5 13"><rect width="14.5" height="13" fill="#afb1b3"/><path d="M2.2,2.8L5.4,5.6L2.2,8.4" stroke="#3c3f41" stroke-width="1.5" fill="none"/><rect x="6.4" y="8.4" width="5" height="1.5" fill="#3c3f41"/></svg>
<svg style="left:327px;top:984px;" width="15" height="15" viewBox="0 0 11 11"><g transform="translate(0,0) scale(1,1)" opacity="1"><path d="M5.4,0C3,0 3.1,1.1 3.1,1.1V2.3H5.5V2.7H2C2,2.7 0,2.5 0,5.4C0,8.3 1.7,8.2 1.7,8.2H2.8V6.8C2.8,6.8 2.7,5.1 4.5,5.1H6.8C6.8,5.1 8.4,5.1 8.4,3.5V1.6C8.4,1.6 8.7,0 5.4,0Z" fill="#a4a7a9"/><path d="M5.4,0C3,0 3.1,1.1 3.1,1.1V2.3H5.5V2.7H2C2,2.7 0,2.5 0,5.4C0,8.3 1.7,8.2 1.7,8.2H2.8V6.8C2.8,6.8 2.7,5.1 4.5,5.1H6.8C6.8,5.1 8.4,5.1 8.4,3.5V1.6C8.4,1.6 8.7,0 5.4,0Z" fill="#a4a7a9" transform="rotate(180 5.5 5.5)"/><circle cx="4.1" cy="1.25" r="0.5" fill="#2b2b2b" opacity=".6"/><circle cx="6.9" cy="9.75" r="0.5" fill="#2b2b2b" opacity=".6"/></g></svg>
<svg style="left:7px;top:1010px;" width="16.5" height="16.5" viewBox="0 0 16.5 16.5"><g stroke="#9b9d9f" stroke-width="1.3" fill="none"><rect x="3.8" y="0.7" width="12" height="11.6"/><path d="M0.7,3.6V15.6H12.6"/></g></svg>
<svg style="left:1230px;top:930px;" width="270" height="64" viewBox="0 0 270 64"><defs><filter id="wb" x="-5%" y="-5%" width="110%" height="110%"><feGaussianBlur stdDeviation="0.7"/></filter></defs><g filter="url(#wb)"><g fill="rgba(0,0,0,.75)" font-weight="bold" font-family="'Liberation Sans','Noto Sans CJK SC',sans-serif"><text x="16.4" y="50" font-size="47">知乎</text><text x="125.5" y="45.7" font-size="40">@</text><text x="167.8" y="50.4" font-size="44">书生</text></g></g><g fill="#ffffff" font-weight="bold" font-family="'Liberation Sans','Noto Sans CJK SC',sans-serif"><text x="14.9" y="48.4" font-size="47">知乎</text><text x="124" y="44.1" font-size="40">@</text><text x="166.3" y="48.8" font-size="44">书生</text></g></svg>
<span class="m" style="left:364.70px;top:109.87px;font-size:20.0px;line-height:26px;letter-spacing:-1.002px;color:#a9b7c6;">TempStr = </span>
<span class="m" style="left:474.70px;top:109.87px;font-size:20.0px;line-height:26px;letter-spacing:-1.002px;color:#8888c6;">input</span>
<span class="m" style="left:529.70px;top:109.87px;font-size:20.0px;line-height:26px;letter-spacing:-1.002px;color:#a9b7c6;">(</span>
<span class="m" style="left:540.70px;top:109.87px;font-size:20.0px;line-height:26px;letter-spacing:-1.002px;color:#6a8759;">&quot;</span>
<svg style="left:552.2px;top:109.90px;" width="216.0" height="23.4" viewBox="0 0 216 23.4"><text x="0" y="18" font-size="18" fill="#6a8759" font-family="'Liberation Mono','Noto Serif CJK SC',monospace">请输入带有符号的温度值：</text></svg>
<span class="m" style="left:767.70px;top:109.87px;font-size:20.0px;line-height:26px;letter-spacing:-1.002px;color:#6a8759;">&quot;</span>
<span class="m" style="left:778.70px;top:109.87px;font-size:20.0px;line-height:26px;letter-spacing:-1.002px;color:#a9b7c6;">)</span>
<span class="m" style="left:364.70px;top:138.54px;font-size:20.0px;line-height:26px;letter-spacing:-1.002px;color:#cc7832;">if</span>
<span class="m" style="left:386.70px;top:138.54px;font-size:20.0px;line-height:26px;letter-spacing:-1.002px;color:#a9b7c6;"> TempStr[-</span>
<span class="m" style="left:496.70px;top:138.54px;font-size:20.0px;line-height:26px;letter-spacing:-1.002px;color:#6897bb;">1</span>
<span class="m" style="left:507.70px;top:138.54px;font-size:20.0px;line-height:26px;letter-spacing:-1.002px;color:#a9b7c6;">] </span>
<span class="m" style="left:529.70px;top:138.54px;font-size:20.0px;line-height:26px;letter-spacing:-1.002px;color:#cc7832;">in</span>
<span class="m" style="left:551.70px;top:138.54px;font-size:20.0px;line-height:26px;letter-spacing:-1.002px;color:#a9b7c6;"> [</span>
<span class="m" style="left:573.70px;top:138.54px;font-size:20.0px;line-height:26px;letter-spacing:-1.002px;color:#6a8759;">&#x27;F&#x27;</span>
<span class="m" style="left:606.70px;top:138.54px;font-size:20.0px;line-height:26px;letter-spacing:-1.002px;color:#cc7832;">,</span>
<span class="m" style="left:628.70px;top:138.54px;font-size:20.0px;line-height:26px;letter-spacing:-1.002px;color:#6a8759;">&#x27;f&#x27;</span>
<span class="m" style="left:661.70px;top:138.54px;font-size:20.0px;line-height:26px;letter-spacing:-1.002px;color:#a9b7c6;">]:</span>
<span class="m" style="left:364.70px;top:167.20px;font-size:20.0px;line-height:26px;letter-spacing:-1.002px;color:#a9b7c6;">    C = (</span>
<span class="m" style="left:463.70px;top:167.20px;font-size:20.0px;line-height:26px;letter-spacing:-1.002px;color:#8888c6;">eval</span>
<span class="m" style="left:507.70px;top:167.20px;font-size:20.0px;line-height:26px;letter-spacing:-1.002px;color:#a9b7c6;">(TempStr[</span>
<span class="m" style="left:606.70px;top:167.20px;font-size:20.0px;line-height:26px;letter-spacing:-1.002px;color:#6897bb;">0</span>
<span class="m" style="left:617.70px;top:167.20px;font-size:20.0px;line-height:26px;letter-spacing:-1.002px;color:#a9b7c6;">:-</span>
<span class="m" style="left:639.70px;top:167.20px;font-size:20.0px;line-height:26px;letter-spacing:-1.002px;color:#6897bb;">1</span>
<span class="m" style="left:650.70px;top:167.20px;font-size:20.0px;line-height:26px;letter-spacing:-1.002px;color:#a9b7c6;">]) - </span>
<span class="m" style="left:705.70px;top:167.20px;font-size:20.0px;line-height:26px;letter-spacing:-1.002px;color:#6897bb;">32</span>
<span class="m" style="left:727.70px;top:167.20px;font-size:20.0px;line-height:26px;letter-spacing:-1.002px;color:#a9b7c6;">)/</span>
<span class="m" style="left:749.70px;top:167.20px;font-size:20.0px;line-height:26px;letter-spacing:-1.002px;color:#6897bb;">1.8</span>
<span class="m" style="left:408.70px;top:195.87px;font-size:20.0px;line-height:26px;letter-spacing:-1.002px;color:#8888c6;">print</span>
<span class="m" style="left:463.70px;top:195.87px;font-size:20.0px;line-height:26px;letter-spacing:-1.002px;color:#a9b7c6;">(</span>
<span class="m" style="left:474.70px;top:195.87px;font-size:20.0px;line-height:26px;letter-spacing:-1.002px;color:#6a8759;">&quot;</span>
<svg style="left:486.2px;top:195.90px;" width="108.0" height="23.4" viewBox="0 0 108 23.4"><text x="0" y="18" font-size="18" fill="#6a8759" font-family="'Liberation Mono','Noto Serif CJK SC',monospace">转换后温度是</text></svg>
<span class="m" style="left:593.70px;top:195.87px;font-size:20.0px;line-height:26px;letter-spacing:-1.002px;color:#6a8759;">{:.2f}C&quot;</span>
<span class="m" style="left:681.70px;top:195.87px;font-size:20.0px;line-height:26px;letter-spacing:-1.002px;color:#a9b7c6;">.format(C))</span>
<span class="m" style="left:364.70px;top:224.54px;font-size:20.0px;line-height:26px;letter-spacing:-1.002px;color:#cc7832;">elif</span>
<span class="m" style="left:408.70px;top:224.54px;font-size:20.0px;line-height:26px;letter-spacing:-1.002px;color:#a9b7c6;"> TempStr[-</span>
<span class="m" style="left:518.70px;top:224.54px;font-size:20.0px;line-height:26px;letter-spacing:-1.002px;color:#6897bb;">1</span>
<span class="m" style="left:529.70px;top:224.54px;font-size:20.0px;line-height:26px;letter-spacing:-1.002px;color:#a9b7c6;">] </span>
<span class="m" style="left:551.70px;top:224.54px;font-size:20.0px;line-height:26px;letter-spacing:-1.002px;color:#cc7832;">in</span>
<span class="m" style="left:573.70px;top:224.54px;font-size:20.0px;line-height:26px;letter-spacing:-1.002px;color:#a9b7c6;"> [</span>
<span class="m" style="left:595.70px;top:224.54px;font-size:20.0px;line-height:26px;letter-spacing:-1.002px;color:#6a8759;">&#x27;C&#x27;</span>
<span class="m" style="left:628.70px;top:224.54px;font-size:20.0px;line-height:26px;letter-spacing:-1.002px;color:#cc7832;">,</span>
<span class="m" style="left:650.70px;top:224.54px;font-size:20.0px;line-height:26px;letter-spacing:-1.002px;color:#6a8759;">&#x27;c&#x27;</span>
<span class="m" style="left:683.70px;top:224.54px;font-size:20.0px;line-height:26px;letter-spacing:-1.002px;color:#a9b7c6;">]:</span>
<span class="m" style="left:364.70px;top:253.21px;font-size:20.0px;line-height:26px;letter-spacing:-1.002px;color:#a9b7c6;">    F = </span>
<span class="m" style="left:452.70px;top:253.21px;font-size:20.0px;line-height:26px;letter-spacing:-1.002px;color:#6897bb;">1.8</span>
<span class="m" style="left:485.70px;top:253.21px;font-size:20.0px;line-height:26px;letter-spacing:-1.002px;color:#a9b7c6;">*</span>
<span class="m" style="left:496.70px;top:253.21px;font-size:20.0px;line-height:26px;letter-spacing:-1.002px;color:#8888c6;">eval</span>
<span class="m" style="left:540.70px;top:253.21px;font-size:20.0px;line-height:26px;letter-spacing:-1.002px;color:#a9b7c6;">(TempStr[</span>
<span class="m" style="left:639.70px;top:253.21px;font-size:20.0px;line-height:26px;letter-spacing:-1.002px;color:#6897bb;">0</span>
<span class="m" style="left:650.70px;top:253.21px;font-size:20.0px;line-height:26px;letter-spacing:-1.002px;color:#a9b7c6;">:-</span>
<span class="m" style="left:672.70px;top:253.21px;font-size:20.0px;line-height:26px;letter-spacing:-1.002px;color:#6897bb;">1</span>
<span class="m" style="left:683.70px;top:253.21px;font-size:20.0px;line-height:26px;letter-spacing:-1.002px;color:#a9b7c6;">]) + </span>
<span class="m" style="left:738.70px;top:253.21px;font-size:20.0px;line-height:26px;letter-spacing:-1.002px;color:#6897bb;">32</span>
<span class="m" style="left:408.70px;top:281.87px;font-size:20.0px;line-height:26px;letter-spacing:-1.002px;color:#8888c6;">print</span>
<span class="m" style="left:463.70px;top:281.87px;font-size:20.0px;line-height:26px;letter-spacing:-1.002px;color:#a9b7c6;">(</span>
<span class="m" style="left:474.70px;top:281.87px;font-size:20.0px;line-height:26px;letter-spacing:-1.002px;color:#6a8759;">&quot;</span>
<svg style="left:486.2px;top:281.90px;" width="108.0" height="23.4" viewBox="0 0 108 23.4"><text x="0" y="18" font-size="18" fill="#6a8759" font-family="'Liberation Mono','Noto Serif CJK SC',monospace">转换后温度是</text></svg>
<span class="m" style="left:593.70px;top:281.87px;font-size:20.0px;line-height:26px;letter-spacing:-1.002px;color:#6a8759;">{:.2f}F&quot;</span>
<span class="m" style="left:681.70px;top:281.87px;font-size:20.0px;line-height:26px;letter-spacing:-1.002px;color:#a9b7c6;">.format(F))</span>
<span class="m" style="left:364.70px;top:310.54px;font-size:20.0px;line-height:26px;letter-spacing:-1.002px;color:#cc7832;">else</span>
<span class="m" style="left:408.70px;top:310.54px;font-size:20.0px;line-height:26px;letter-spacing:-1.002px;color:#a9b7c6;">:</span>
<span class="m" style="left:408.70px;top:339.21px;font-size:20.0px;line-height:26px;letter-spacing:-1.002px;color:#8888c6;">print</span>
<span class="m" style="left:463.70px;top:339.21px;font-size:20.0px;line-height:26px;letter-spacing:-1.002px;color:#a9b7c6;">(</span>
<span class="m" style="left:474.70px;top:339.21px;font-size:20.0px;line-height:26px;letter-spacing:-1.002px;color:#6a8759;">&quot;</span>
<svg style="left:486.2px;top:339.24px;" width="108.0" height="23.4" viewBox="0 0 108 23.4"><text x="0" y="18" font-size="18" fill="#6a8759" font-family="'Liberation Mono','Noto Serif CJK SC',monospace">输入格式错误</text></svg>
<span class="m" style="left:593.70px;top:339.21px;font-size:20.0px;line-height:26px;letter-spacing:-1.002px;color:#6a8759;">&quot;</span>
<span class="m" style="left:604.70px;top:339.21px;font-size:20.0px;line-height:26px;letter-spacing:-1.002px;color:#a9b7c6;">)</span>
<span class="m" style="left:293.70px;top:109.87px;font-size:20.0px;line-height:26px;letter-spacing:-1.002px;color:#606366;">1</span>
<span class="m" style="left:293.70px;top:138.54px;font-size:20.0px;line-height:26px;letter-spacing:-1.002px;color:#606366;">2</span>
<span class="m" style="left:293.70px;top:167.20px;font-size:20.0px;line-height:26px;letter-spacing:-1.002px;color:#606366;">3</span>
<span class="m" style="left:293.70px;top:195.87px;font-size:20.0px;line-height:26px;letter-spacing:-1.002px;color:#606366;">4</span>
<span class="m" style="left:293.70px;top:224.54px;font-size:20.0px;line-height:26px;letter-spacing:-1.002px;color:#606366;">5</span>
<span class="m" style="left:293.70px;top:253.21px;font-size:20.0px;line-height:26px;letter-spacing:-1.002px;color:#606366;">6</span>
<span class="m" style="left:293.70px;top:281.87px;font-size:20.0px;line-height:26px;letter-spacing:-1.002px;color:#606366;">7</span>
<span class="m" style="left:293.70px;top:310.54px;font-size:20.0px;line-height:26px;letter-spacing:-1.002px;color:#606366;">8</span>
<span class="m" style="left:293.70px;top:339.21px;font-size:20.0px;line-height:26px;letter-spacing:-1.002px;color:#606366;">9</span>
<span class="m" style="left:282.70px;top:367.87px;font-size:20.0px;line-height:26px;letter-spacing:-1.002px;color:#a4a3a3;">10</span>
<span class="m" style="left:116.50px;top:806.67px;font-size:20.0px;line-height:26px;letter-spacing:-1.002px;color:#bbbbbb;">&quot;E:\Code Source\Python code source\Test\venv\Scripts\python.exe&quot; &quot;E:/Code Source/Python code source/Test/Temperature_Conversion&quot;</span>
<svg style="left:117px;top:836.80px;" width="216.0" height="23.4" viewBox="0 0 216 23.4"><text x="0" y="18" font-size="18" fill="#bbbbbb" font-family="'Liberation Mono','Noto Serif CJK SC',monospace">请输入带有符号的温度值：</text></svg>
</div></body></html>
